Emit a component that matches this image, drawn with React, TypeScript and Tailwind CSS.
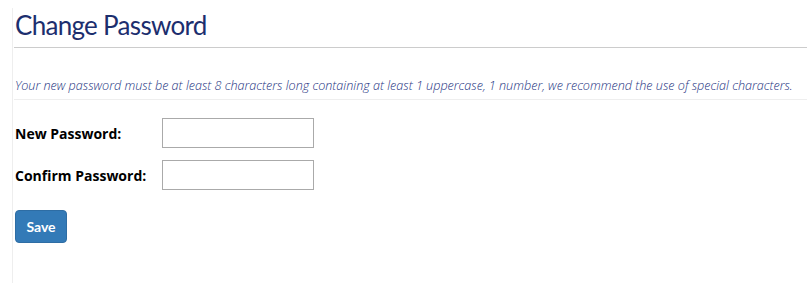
import React, { useState } from 'react';

export default function App() {
  const [newPassword, setNewPassword] = useState('');
  const [confirmPassword, setConfirmPassword] = useState('');

  return (
    <div className="h-[289px] w-[807px] bg-white">
      <div className="ml-3 mt-2 h-[275px] border-l border-[#eeeeee] pl-[1px]">
        <h1 className="h-[40px] border-b border-[#cccccc] pl-[1px] pt-[1px] font-['Lato',sans-serif] text-[26px] leading-[32px] tracking-[-0.7px] text-[#1c2e6e]">
          Change Password
        </h1>

        <p className="mt-[29px] border-b border-[#eeeeee] pb-[5px] pl-[1px] font-['Open_Sans',sans-serif] text-[12.6px] font-light italic leading-[17px] text-[#24337f]">
          Your new password must be at least 8 characters long containing at least 1 uppercase, 1 number, we recommend the use of special characters.
        </p>

        <form className="mt-[18px] flex flex-col gap-3 pl-[1px] font-['Open_Sans',sans-serif]">
          <div className="flex items-center">
            <label className="w-[147px] text-[14px] font-bold text-black">New Password:</label>
            <input
              type="password"
              value={newPassword}
              onChange={(e) => setNewPassword(e.target.value)}
              className="h-[30px] w-[152px] border border-[#aaaaaa] bg-white px-1 text-[13px] outline-none"
            />
          </div>
          <div className="flex items-center">
            <label className="w-[147px] text-[14px] font-bold text-black">Confirm Password:</label>
            <input
              type="password"
              value={confirmPassword}
              onChange={(e) => setConfirmPassword(e.target.value)}
              className="h-[30px] w-[152px] border border-[#aaaaaa] bg-white px-1 text-[13px] outline-none"
            />
          </div>
          <div className="mt-[8px]">
            <button
              type="button"
              className="h-[33px] w-[52px] rounded-[4px] border border-[#2e6da4] bg-[#337ab7] font-['Lato',sans-serif] text-[14px] font-bold text-white"
            >
              Save
            </button>
          </div>
        </form>
      </div>
    </div>
  );
}
